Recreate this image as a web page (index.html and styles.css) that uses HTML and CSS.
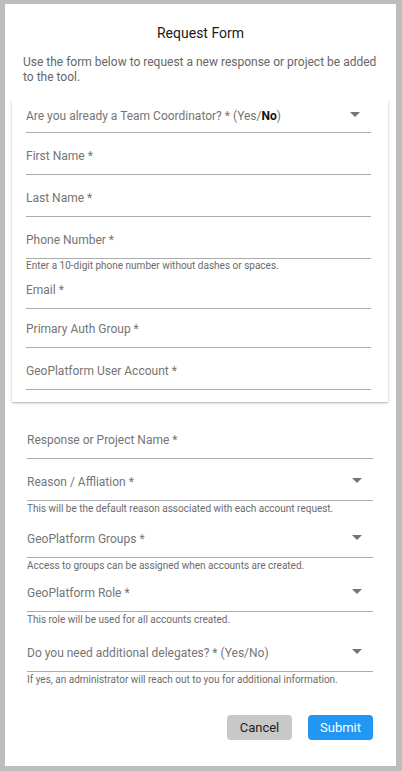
FILE: index.html
```html
<!DOCTYPE html>
<html lang="en">
<head>
<meta charset="utf-8">
<title>Request Form</title>
<link rel="stylesheet" href="styles.css">
</head>
<body>
<div class="dialog">
  <h1 class="title">Request Form</h1>
  <p class="intro">Use the form below to request a new response or project be added to the tool.</p>

  <div class="card">
    <div class="field select first">
      <span class="label">Are you already a Team Coordinator? * (Yes/<b>No</b>)</span>
      <span class="arrow"></span>
    </div>
    <div class="field"><span class="label">First Name *</span></div>
    <div class="field"><span class="label">Last Name *</span></div>
    <div class="field"><span class="label">Phone Number *</span></div>
    <div class="hint hint-phone">Enter a 10-digit phone number without dashes or spaces.</div>
    <div class="field"><span class="label">Email *</span></div>
    <div class="field tight"><span class="label">Primary Auth Group *</span></div>
    <div class="field"><span class="label">GeoPlatform User Account *</span></div>
  </div>

  <div class="fields">
    <div class="field"><span class="label">Response or Project Name *</span></div>
    <div class="field select">
      <span class="label">Reason / Affliation *</span>
      <span class="arrow"></span>
    </div>
    <div class="hint hint-a">This will be the default reason associated with each account request.</div>
    <div class="field select">
      <span class="label">GeoPlatform Groups *</span>
      <span class="arrow"></span>
    </div>
    <div class="hint hint-b">Access to groups can be assigned when accounts are created.</div>
    <div class="field select">
      <span class="label">GeoPlatform Role *</span>
      <span class="arrow"></span>
    </div>
    <div class="hint hint-c">This role will be used for all accounts created.</div>
    <div class="field select">
      <span class="label">Do you need additional delegates? * (Yes/No)</span>
      <span class="arrow"></span>
    </div>
    <div class="hint">If yes, an administrator will reach out to you for additional information.</div>
  </div>

  <div class="actions">
    <button class="btn btn-cancel" type="button">Cancel</button>
    <button class="btn btn-submit" type="button">Submit</button>
  </div>
</div>
</body>
</html>
```
FILE: styles.css
```css
* { box-sizing: border-box; }

html, body {
  margin: 0;
  height: 771px;
  overflow: hidden;
}

body {
  background: #bdbdbd;
  padding: 4px 6px 5px 5px;
  font-family: Roboto, "Liberation Sans", Arial, sans-serif;
  color: #212121;
}

.dialog {
  background: #ffffff;
  height: 762px;
  display: flex;
  flex-direction: column;
}

.title {
  margin: 19px 0 0;
  font-size: 14px;
  line-height: 20px;
  font-weight: 400;
  text-align: center;
  color: #1a1a1a;
}

.intro {
  margin: 12px 0 0;
  padding: 0 18px;
  font-size: 12px;
  line-height: 15px;
  color: #666666;
}

.card {
  margin: 15px 8px 0 7px;
  padding: 0 17px 12px 14px;
  background: #ffffff;
  box-shadow: 0 1px 3px rgba(0, 0, 0, 0.22), 0 1px 1px rgba(0, 0, 0, 0.1);
  clip-path: inset(0 -8px -8px -8px);
}

.field {
  display: flex;
  align-items: center;
  padding: 15px 0 10px;
  border-bottom: 1px solid #ababab;
}

.field.first {
  padding: 8px 0 8px;
}

.field.tight {
  padding-top: 12px;
}

.label {
  flex: 1;
  font-size: 12px;
  line-height: 16px;
  color: #757575;
  white-space: nowrap;
}

.label b {
  color: #111111;
  font-weight: 700;
}

.arrow {
  width: 0;
  height: 0;
  border-left: 5px solid transparent;
  border-right: 5px solid transparent;
  border-top: 5px solid #757575;
  margin: 0 11px 3px 0;
}

.hint {
  margin-top: 2px;
  font-size: 10px;
  line-height: 12px;
  color: #6b6b6b;
  white-space: nowrap;
}

.hint-phone { margin-top: 1px; margin-bottom: -5px; }
.hint-a { margin-bottom: 1px; }
.hint-b { margin-bottom: -2px; }
.hint-c { margin-bottom: 4px; }

.fields {
  margin-top: 15px;
  padding: 0 23px 0 22px;
}

.actions {
  margin-top: 29px;
  padding-right: 23px;
  display: flex;
  justify-content: flex-end;
  gap: 16px;
}

.btn {
  width: 65px;
  height: 25px;
  padding: 0;
  border: none;
  border-radius: 4px;
  font-family: Roboto, "Liberation Sans", Arial, sans-serif;
  font-size: 13px;
  line-height: 25px;
  cursor: pointer;
}

.btn-cancel {
  background: #c8c8c8;
  color: #1e1e1e;
}

.btn-submit {
  background: #2196f3;
  color: #ffffff;
}
```
